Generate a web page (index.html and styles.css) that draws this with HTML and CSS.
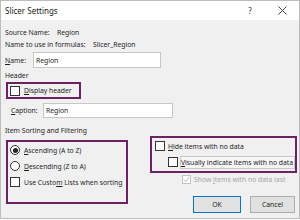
FILE: index.html
```html
<!DOCTYPE html>
<html>
<head>
<meta charset="utf-8">
<link rel="stylesheet" href="styles.css">
</head>
<body>
<div class="dialog">
  <div class="titlebar">
    <span class="title">Slicer Settings</span>
    <span class="help">?</span>
    <span class="close"><svg width="9" height="9" viewBox="0 0 9 9"><path d="M0.5 0.5 L8.5 8.5 M8.5 0.5 L0.5 8.5" stroke="#333" stroke-width="0.9" fill="none"/></svg></span>
  </div>
  <div class="content">
    <div class="info first"><span class="lbl-src">Source Name:</span><span>Region</span></div>
    <div class="info"><span class="lbl-formula">Name to use in formulas:</span><span>Slicer_Region</span></div>
    <div class="field name-row"><span class="lbl-name"><u>N</u>ame:</span><div class="input name-input">Region</div></div>
    <div class="group-title header-title">Header</div>
    <div class="hl hl-header"><span class="cb"></span><span class="opt-text"><u>D</u>isplay header</span></div>
    <div class="field caption-row"><span class="lbl-caption"><u>C</u>aption:</span><div class="input caption-input">Region</div></div>
    <div class="group-title sort-title">Item Sorting and Filtering</div>
    <div class="columns">
      <div class="hl hl-sort">
        <div class="opt"><span class="radio checked"></span><span class="opt-text"><u>A</u>scending (A to Z)</span></div>
        <div class="opt"><span class="radio"></span><span class="opt-text"><u>D</u>escending (Z to A)</span></div>
        <div class="opt"><span class="cb"></span><span class="opt-text">Use Custo<u>m</u> Lists when sorting</span></div>
      </div>
      <div class="right-col">
        <div class="hl hl-filter">
          <div class="opt hide-row"><span class="cb"></span><span class="opt-text"><u>H</u>ide items with no data</span></div>
          <div class="opt vis-row"><span class="cb"></span><span class="opt-text focus"><u>V</u>isually indicate items with no data</span></div>
        </div>
        <div class="opt show-row"><span class="cb disabled"><svg width="7" height="7" viewBox="0 0 7 7"><path d="M0.8 3.6 L2.7 5.5 L6.2 1.2" stroke="#b4b4b4" stroke-width="1" fill="none"/></svg></span><span class="opt-text dim">Show <u>i</u>tems with no data last</span></div>
        <div class="buttons">
          <div class="btn default">OK</div>
          <div class="btn">Cancel</div>
        </div>
      </div>
    </div>
  </div>
</div>
</body>
</html>
```

FILE: styles.css
```css
html, body {
  margin: 0;
  padding: 0;
  background: #ffffff;
}
body {
  width: 300px;
  height: 220px;
  overflow: hidden;
  font-family: "Noto Sans", "Open Sans", sans-serif;
  font-size: 6.8px;
  color: #1e1e1e;
}
u { text-decoration-thickness: 0.6px; text-underline-offset: 1px; }
.dialog {
  box-sizing: border-box;
  width: 300px;
  height: 219px;
  border: 1px solid #bdbdbd;
  background: #f0f0f0;
}
.titlebar {
  height: 19px;
  background: #ffffff;
  display: flex;
  align-items: center;
}
.title {
  margin-left: 4px;
  font-size: 8px;
  color: #222;
}
.help {
  margin-left: auto;
  width: 10px;
  text-align: center;
  font-size: 8px;
  color: #333;
  margin-right: 23px;
}
.close {
  width: 9px;
  height: 9px;
  margin-right: 12px;
  display: flex;
}
.content {
  padding-left: 4px;
  display: flex;
  flex-direction: column;
}
.info {
  height: 12px;
  display: flex;
  align-items: center;
}
.info.first { margin-top: 6px; }
.lbl-src { width: 52px; }
.lbl-formula { width: 88px; }
.field {
  display: flex;
  align-items: center;
}
.name-row { margin-top: 2px; height: 16px; }
.lbl-name { width: 28px; }
.input {
  box-sizing: border-box;
  background: #ffffff;
  border: 1px solid #c6c6c6;
  display: flex;
  align-items: center;
  padding-left: 2px;
}
.name-input { width: 128px; height: 16px; }
.group-title {
  display: flex;
  align-items: center;
}
.header-title { margin-top: 1px; height: 12px; }
.hl {
  box-sizing: border-box;
  border: 2px solid #6b2163;
}
.hl-header {
  margin-top: 1px;
  margin-left: 1px;
  width: 75px;
  height: 17px;
  display: flex;
  align-items: center;
  padding-left: 2px;
}
.caption-row { margin-top: 4px; margin-left: 6px; height: 15px; }
.lbl-caption { width: 32px; }
.caption-input { width: 130px; height: 15px; }
.sort-title { margin-top: 7px; height: 11px; }
.columns {
  display: flex;
  align-items: flex-start;
}
.hl-sort {
  margin-top: 4px;
  margin-left: 1px;
  width: 122px;
  height: 64px;
  padding-left: 2px;
  display: flex;
  flex-direction: column;
}
.opt {
  height: 16px;
  display: flex;
  align-items: center;
}
.opt-text { margin-left: 4px; white-space: nowrap; }
.radio {
  box-sizing: border-box;
  width: 10px;
  height: 10px;
  border: 1px solid #333;
  border-radius: 50%;
  background: #fff;
  display: flex;
  align-items: center;
  justify-content: center;
}
.radio.checked::after {
  content: "";
  width: 5px;
  height: 5px;
  border-radius: 50%;
  background: #222;
}
.cb {
  box-sizing: border-box;
  width: 10px;
  height: 10px;
  border: 1px solid #333;
  background: #fff;
  flex: none;
}
.cb.disabled {
  width: 9px;
  height: 9px;
  border-color: #c4c4c4;
  display: flex;
  align-items: center;
  justify-content: center;
}
.right-col {
  margin-left: 22px;
  width: 147px;
  display: flex;
  flex-direction: column;
}
.hl-filter {
  height: 37px;
  padding-left: 3px;
  display: flex;
  flex-direction: column;
}
.hide-row .opt-text { margin-left: 3px; }
.vis-row { margin-left: 13px; }
.focus {
  box-sizing: border-box;
  margin-left: 2px;
  border: 1px solid #c8c8c8;
  background: #f5f5f5;
  padding: 1px 1px 1px 0;
  width: 116px;
}
.show-row { height: 12px; margin-left: 32px; }
.dim { color: #a6a6a6; margin-left: 3px; }
.buttons {
  margin-top: 11px;
  display: flex;
  justify-content: flex-end;
  padding-right: 2px;
  gap: 9px;
}
.btn {
  box-sizing: border-box;
  width: 45px;
  height: 17px;
  border: 1px solid #adadad;
  background: #e1e1e1;
  display: flex;
  align-items: center;
  justify-content: center;
}
.btn.default {
  width: 48px;
  border-color: #0078d7;
}
```
